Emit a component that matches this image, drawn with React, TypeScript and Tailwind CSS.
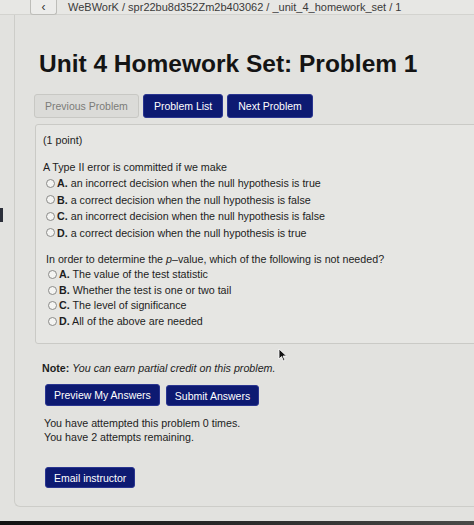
import React from 'react';

const firstOptions = [
  { key: 'A', text: 'an incorrect decision when the null hypothesis is true' },
  { key: 'B', text: 'a correct decision when the null hypothesis is false' },
  { key: 'C', text: 'an incorrect decision when the null hypothesis is false' },
  { key: 'D', text: 'a correct decision when the null hypothesis is true' },
];

const secondOptions = [
  { key: 'A', text: 'The value of the test statistic' },
  { key: 'B', text: 'Whether the test is one or two tail' },
  { key: 'C', text: 'The level of significance' },
  { key: 'D', text: 'All of the above are needed' },
];

function Radio() {
  return (
    <span className="inline-block w-[9px] h-[9px] rounded-full border border-[#8a8a88] bg-[#f4f4f2] mr-[2px] shrink-0" />
  );
}

function OptionList({
  options,
  leading,
}: {
  options: { key: string; text: string }[];
  leading: string;
}) {
  return (
    <div className={`ml-[3px] ${leading}`}>
      {options.map((o) => (
        <div key={o.key} className="flex items-center">
          <Radio />
          <span>
            <b>{o.key}.</b> {o.text}
          </span>
        </div>
      ))}
    </div>
  );
}

function NavyButton({ children, className }: { children: React.ReactNode; className?: string }) {
  return (
    <button
      className={`bg-[#0d1a72] text-white border border-[#2a3590] rounded-[3px] text-[10.5px] leading-none ${className ?? 'px-[10px]'}`}
    >
      {children}
    </button>
  );
}

export default function App() {
  return (
    <div
      className="relative w-full h-[525px] overflow-hidden bg-[#e2e2df] text-[#1d1d1d] flex flex-col"
      style={{ fontFamily: '"Liberation Sans", Arial, sans-serif' }}
    >
      {/* Breadcrumb bar at the top edge */}
      <div className="h-[15px] shrink-0 flex items-start bg-[#e7e7e4] border-b border-[#d3d3cf]">
        <div className="ml-[30px] w-[27px] h-[15px] border border-t-0 border-[#bdbdb9] rounded-b-[3px] bg-[#ececea] flex items-center justify-center text-[12px] leading-none text-[#333]">
          ‹
        </div>
        <span className="ml-[11px] mt-[1px] text-[11px] leading-[12px] text-[#3a3a3a] whitespace-nowrap">
          WeBWorK / spr22bu8d352Zm2b403062 / _unit_4_homework_set / 1
        </span>
      </div>

      <div className="flex-1 flex">
        <div className="ml-[14px] w-full h-[492px] border-l border-b border-[#cdcdc9] rounded-bl-[6px] pl-[19px]">
          {/* Title */}
          <h1 className="ml-[5px] mt-[34px] text-[24.5px] leading-[30px] font-bold text-[#141414] whitespace-nowrap">
            Unit 4 Homework Set: Problem 1
          </h1>

          {/* Nav buttons */}
          <div className="mt-[15px] flex gap-[4px] h-[24px]">
            <button className="bg-[#dbdbd8] border border-[#c8c8c4] rounded-[3px] px-[10px] text-[10.5px] text-[#7b7b79] leading-none">
              Previous Problem
            </button>
            <NavyButton>Problem List</NavyButton>
            <NavyButton>Next Problem</NavyButton>
          </div>

          {/* Problem box */}
          <div className="mt-[6px] ml-[1px] -mr-[20px] bg-[#e6e6e3] border border-[#cacac6] rounded-l-[3px] pl-[7px] pt-[7px] pb-[14px] text-[10.7px]">
            <p className="leading-[16px]">(1 point)</p>

            <p className="mt-[11px] leading-[16px]">A Type II error is committed if we make</p>
            <OptionList options={firstOptions} leading="leading-[16.5px]" />

            <p className="mt-[10px] ml-[3px] leading-[16px]">
              In order to determine the <i>p</i>&#8211;value, which of the following is not needed?
            </p>
            <div className="ml-[2px]">
              <OptionList options={secondOptions} leading="leading-[15.6px]" />
            </div>
          </div>

          {/* Note */}
          <p className="mt-[16px] ml-[8px] text-[10.7px] leading-[16px]">
            <b>Note:</b> <i>You can earn partial credit on this problem.</i>
          </p>

          {/* Submit buttons */}
          <div className="mt-[8px] ml-[11px] flex gap-[6px] h-[22px]">
            <NavyButton className="px-[8px]">Preview My Answers</NavyButton>
            <NavyButton className="px-[8px] mt-[1px]">Submit Answers</NavyButton>
          </div>

          <div className="mt-[10px] ml-[10px] text-[10.7px] leading-[14px]">
            <p>You have attempted this problem 0 times.</p>
            <p>You have 2 attempts remaining.</p>
          </div>

          <div className="mt-[23px] ml-[11px] h-[21px] flex">
            <NavyButton className="px-[8px]">Email instructor</NavyButton>
          </div>
        </div>
      </div>

      {/* Bottom dark edge of the screen */}
      <div className="h-[4px] shrink-0 bg-gradient-to-r from-[#121212] via-[#2a2a2a] to-[#4a4a48]" />

      {/* Small dark tab on the left edge */}
      <div className="absolute left-0 top-[208px] w-[3px] h-[14px] bg-[#2b2f3a]" />

      {/* Mouse cursor */}
      <svg className="absolute left-[278px] top-[348px]" width="10" height="14" viewBox="0 0 10 14">
        <path d="M1 1 L1 11 L3.5 8.5 L5.5 13 L7 12.3 L5 8 L8.5 8 Z" fill="#111" stroke="#fff" strokeWidth="0.8" />
      </svg>
    </div>
  );
}
